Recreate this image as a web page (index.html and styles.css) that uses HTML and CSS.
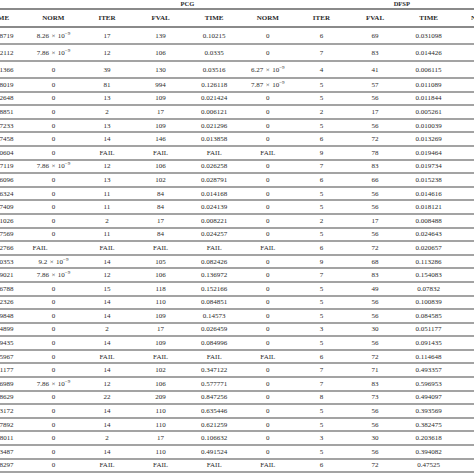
FILE: index.html
```html
<!DOCTYPE html>
<html>
<head>
<meta charset="utf-8">
<link rel="stylesheet" href="styles.css">
</head>
<body>
<div class="wrap">
<table class="res">
<colgroup><col><col><col><col><col><col><col><col><col><col></colgroup>
<thead>
<tr class="grp"><th colspan="2"></th><th colspan="4">PCG</th><th colspan="4">DFSP</th></tr>
<tr class="hdr"><th>TIME</th><th>NORM</th><th>ITER</th><th>FVAL</th><th>TIME</th><th>NORM</th><th>ITER</th><th>FVAL</th><th>TIME</th><th>NORM</th></tr>
</thead>
<tbody>
<tr class="tall"><td class="c0">8719</td><td>8.26<span class="x">×</span>10<sup>−9</sup></td><td>17</td><td>139</td><td>0.10215</td><td>0</td><td>6</td><td>69</td><td>0.031098</td><td></td></tr>
<tr class="tall"><td class="c0">2112</td><td>7.86<span class="x">×</span>10<sup>−9</sup></td><td>12</td><td>106</td><td>0.0335</td><td>0</td><td>7</td><td>83</td><td>0.014426</td><td></td></tr>
<tr class="tall"><td class="c0">1366</td><td>0</td><td>39</td><td>130</td><td>0.03516</td><td>6.27<span class="x">×</span>10<sup>−9</sup></td><td>4</td><td>41</td><td>0.006115</td><td></td></tr>
<tr><td class="c0">8019</td><td>0</td><td>81</td><td>994</td><td>0.126118</td><td>7.87<span class="x">×</span>10<sup>−9</sup></td><td>5</td><td>57</td><td>0.011089</td><td></td></tr>
<tr><td class="c0">2648</td><td>0</td><td>13</td><td>109</td><td>0.021424</td><td>0</td><td>5</td><td>56</td><td>0.011844</td><td></td></tr>
<tr><td class="c0">8851</td><td>0</td><td>2</td><td>17</td><td>0.006121</td><td>0</td><td>2</td><td>17</td><td>0.005261</td><td></td></tr>
<tr><td class="c0">7233</td><td>0</td><td>13</td><td>109</td><td>0.021296</td><td>0</td><td>5</td><td>56</td><td>0.010039</td><td></td></tr>
<tr><td class="c0">7458</td><td>0</td><td>14</td><td>146</td><td>0.013858</td><td>0</td><td>6</td><td>72</td><td>0.013269</td><td></td></tr>
<tr><td class="c0">0604</td><td>0</td><td>FAIL</td><td>FAIL</td><td>FAIL</td><td>FAIL</td><td>9</td><td>78</td><td>0.019464</td><td></td></tr>
<tr><td class="c0">7119</td><td>7.86<span class="x">×</span>10<sup>−9</sup></td><td>12</td><td>106</td><td>0.026258</td><td>0</td><td>7</td><td>83</td><td>0.019734</td><td></td></tr>
<tr><td class="c0">6096</td><td>0</td><td>13</td><td>102</td><td>0.028791</td><td>0</td><td>6</td><td>66</td><td>0.015238</td><td></td></tr>
<tr><td class="c0">6324</td><td>0</td><td>11</td><td>84</td><td>0.014168</td><td>0</td><td>5</td><td>56</td><td>0.014616</td><td></td></tr>
<tr><td class="c0">7409</td><td>0</td><td>11</td><td>84</td><td>0.024139</td><td>0</td><td>5</td><td>56</td><td>0.018121</td><td></td></tr>
<tr><td class="c0">1026</td><td>0</td><td>2</td><td>17</td><td>0.008221</td><td>0</td><td>2</td><td>17</td><td>0.008488</td><td></td></tr>
<tr><td class="c0">7569</td><td>0</td><td>11</td><td>84</td><td>0.024257</td><td>0</td><td>5</td><td>56</td><td>0.024643</td><td></td></tr>
<tr><td class="c0">2766</td><td class="l">FAIL</td><td>FAIL</td><td>FAIL</td><td>FAIL</td><td>FAIL</td><td>6</td><td>72</td><td>0.020657</td><td></td></tr>
<tr><td class="c0">0353</td><td>9.2<span class="x">×</span>10<sup>−9</sup></td><td>14</td><td>105</td><td>0.082426</td><td>0</td><td>9</td><td>68</td><td>0.113286</td><td></td></tr>
<tr><td class="c0">9021</td><td>7.86<span class="x">×</span>10<sup>−9</sup></td><td>12</td><td>106</td><td>0.136972</td><td>0</td><td>7</td><td>83</td><td>0.154083</td><td></td></tr>
<tr><td class="c0">6788</td><td>0</td><td>15</td><td>118</td><td>0.152166</td><td>0</td><td>5</td><td>49</td><td>0.07832</td><td></td></tr>
<tr><td class="c0">2326</td><td>0</td><td>14</td><td>110</td><td>0.084851</td><td>0</td><td>5</td><td>56</td><td>0.100839</td><td></td></tr>
<tr><td class="c0">9848</td><td>0</td><td>14</td><td>109</td><td>0.14573</td><td>0</td><td>5</td><td>56</td><td>0.084585</td><td></td></tr>
<tr><td class="c0">4899</td><td>0</td><td>2</td><td>17</td><td>0.026459</td><td>0</td><td>3</td><td>30</td><td>0.051177</td><td></td></tr>
<tr><td class="c0">9435</td><td>0</td><td>14</td><td>109</td><td>0.084996</td><td>0</td><td>5</td><td>56</td><td>0.091435</td><td></td></tr>
<tr><td class="c0">5967</td><td>0</td><td>FAIL</td><td>FAIL</td><td>FAIL</td><td>FAIL</td><td>6</td><td>72</td><td>0.114648</td><td></td></tr>
<tr><td class="c0">1177</td><td>0</td><td>14</td><td>102</td><td>0.347122</td><td>0</td><td>7</td><td>71</td><td>0.493357</td><td></td></tr>
<tr><td class="c0">6989</td><td>7.86<span class="x">×</span>10<sup>−9</sup></td><td>12</td><td>106</td><td>0.577771</td><td>0</td><td>7</td><td>83</td><td>0.596953</td><td></td></tr>
<tr><td class="c0">8629</td><td>0</td><td>22</td><td>209</td><td>0.847256</td><td>0</td><td>8</td><td>73</td><td>0.494097</td><td></td></tr>
<tr><td class="c0">3172</td><td>0</td><td>14</td><td>110</td><td>0.635446</td><td>0</td><td>5</td><td>56</td><td>0.393569</td><td></td></tr>
<tr><td class="c0">7892</td><td>0</td><td>14</td><td>110</td><td>0.621259</td><td>0</td><td>5</td><td>56</td><td>0.382475</td><td></td></tr>
<tr><td class="c0">8011</td><td>0</td><td>2</td><td>17</td><td>0.106632</td><td>0</td><td>3</td><td>30</td><td>0.203618</td><td></td></tr>
<tr><td class="c0">3487</td><td>0</td><td>14</td><td>110</td><td>0.491524</td><td>0</td><td>5</td><td>56</td><td>0.394082</td><td></td></tr>
<tr><td class="c0">8297</td><td>0</td><td>FAIL</td><td>FAIL</td><td>FAIL</td><td>FAIL</td><td>6</td><td>72</td><td>0.47525</td><td></td></tr>
</tbody>
</table>
</div>
</body>
</html>
```

FILE: styles.css
```css
html, body {
  margin: 0;
  padding: 0;
  background: #ffffff;
}

.wrap {
  width: 474px;
  height: 474px;
  overflow: hidden;
}

.res {
  margin-left: -27px;
  width: 536px;
  table-layout: fixed;
  border-collapse: collapse;
  font-family: "Liberation Serif", "Times New Roman", serif;
  font-size: 7px;
  color: #2b2b2b;
}

.res col {
  width: 53.6px;
}

.res th,
.res td {
  padding: 0;
  text-align: center;
  white-space: nowrap;
  overflow: visible;
  line-height: 8px;
  border-bottom: 2px solid #a3a3a3;
}

.res .grp th {
  height: 8px;
  font-weight: bold;
  font-size: 6.5px;
  border-bottom: 2px solid #8a8a8a;
}

.res .hdr th {
  height: 16px;
  font-weight: bold;
  font-size: 7px;
  border-bottom: 2px solid #8a8a8a;
}

.res tbody td {
  height: 11.6px;
}

.res tbody tr.tall td {
  height: 15px;
}

.res td.c0 {
  text-align: right;
  padding-right: 13px;
}

.res td.l {
  text-align: left;
  padding-left: 6px;
}

.res .x {
  margin: 0 2.5px;
}

.res sup {
  font-size: 5px;
  line-height: 0;
  vertical-align: 3px;
}
```
